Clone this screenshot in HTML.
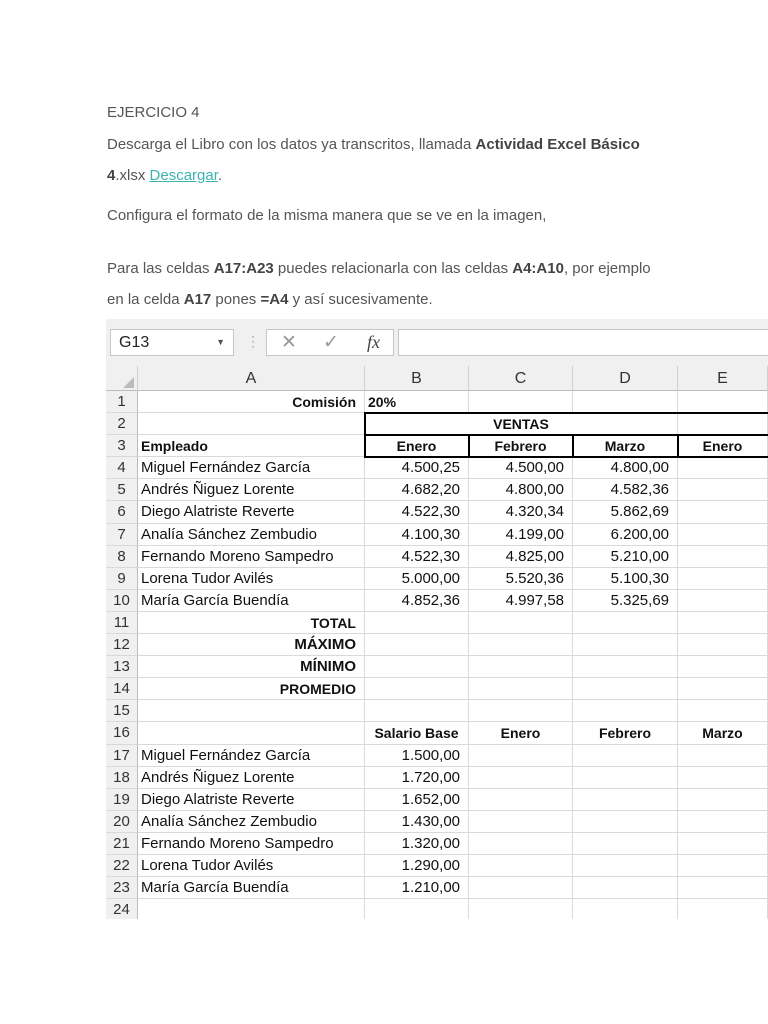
<!DOCTYPE html>
<html><head><meta charset="utf-8"><style>
*{margin:0;padding:0;box-sizing:border-box}
body{width:768px;height:1024px;background:#fff;position:relative;overflow:hidden;font-family:"Liberation Sans",sans-serif}
.t{position:absolute;left:107px;font-size:15px;color:#555;white-space:nowrap}
.t b{color:#444}
.t a{color:#3bb3b0;text-decoration:underline}
#xl{position:absolute;left:106px;top:319px;width:662px;height:600px;background:#fff;overflow:hidden}
#tb{position:absolute;left:0;top:0;width:662px;height:47px;background:#f0f0f0}
.box{position:absolute;background:#fff;border:1px solid #c6c6c6}
#hdr{position:absolute;left:0;top:47px;width:662px;height:25px;background:#f0f0f0;border-bottom:1px solid #bdbdbd;font-size:16px;color:#333}
#hdr div{position:absolute;top:0;height:25px;line-height:25px;text-align:center;border-right:1px solid #d0d0d0}
#g{position:absolute;left:0;top:72px;display:grid;grid-template-columns:32px 227px 104px 104px 105px 90px;grid-auto-rows:22.1px;font-size:15px;color:#111}
#g>div{border-right:1px solid #d9d9d9;border-bottom:1px solid #d9d9d9;white-space:nowrap;overflow:hidden;line-height:22px;padding:0 3px}
#g>div.h{background:#f0f0f0;border-right:1px solid #bdbdbd;text-align:center;padding:0;color:#333;font-size:15px}
.r{text-align:right;padding-right:8px!important}
.c{text-align:center}
.k{font-weight:bold;font-size:14px}
.ln{position:absolute;background:#000}
</style></head><body>
<div class="t" style="top:104px">EJERCICIO 4</div>
<div class="t" style="top:136px">Descarga el Libro con los datos ya transcritos, llamada <b>Actividad Excel Básico</b></div>
<div class="t" style="top:167px"><b>4</b>.xlsx <a>Descargar</a>.</div>
<div class="t" style="top:207px">Configura el formato de la misma manera que se ve en la imagen,</div>
<div class="t" style="top:260px">Para las celdas <b>A17:A23</b> puedes relacionarla con las celdas <b>A4:A10</b>, por ejemplo</div>
<div class="t" style="top:291px">en la celda <b>A17</b> pones <b>=A4</b> y así sucesivamente.</div>

<div id="xl">
<div id="tb">
 <div class="box" style="left:4px;top:10px;width:124px;height:27px;font-size:16px;line-height:25px;padding-left:8px;color:#222">G13<span style="position:absolute;right:8px;font-size:9px;color:#555">▼</span></div>
 <div style="position:absolute;left:140px;top:14px;font-size:14px;color:#aaa">⋮</div>
 <div class="box" style="left:160px;top:10px;width:128px;height:27px;font-size:19px;line-height:25px;color:#999"><span style="position:absolute;left:14px">✕</span><span style="position:absolute;left:56px">✓</span><span style="position:absolute;left:100px;font-family:'Liberation Serif',serif;font-style:italic;font-size:18px;color:#444">fx</span></div>
 <div class="box" style="left:292px;top:10px;width:380px;height:27px"></div>
</div>
<div id="hdr">
 <div style="left:0;width:32px"><span style="position:absolute;right:3px;bottom:3px;width:0;height:0;border-left:11px solid transparent;border-bottom:11px solid #bbb"></span></div>
 <div style="left:32px;width:227px">A</div><div style="left:259px;width:104px">B</div><div style="left:363px;width:104px">C</div><div style="left:467px;width:105px">D</div><div style="left:572px;width:90px">E</div>
</div>
<div id="g">
<div class="h">1</div><div class="r k">Comisión</div><div class="k">20%</div><div></div><div></div><div></div>
<div class="h">2</div><div></div><div style="grid-column:span 3" class="c k">VENTAS</div><div></div>
<div class="h">3</div><div class="k">Empleado</div><div class="c k">Enero</div><div class="c k">Febrero</div><div class="c k">Marzo</div><div class="c k">Enero</div>
<div class="h">4</div><div>Miguel Fernández García</div><div class="r">4.500,25</div><div class="r">4.500,00</div><div class="r">4.800,00</div><div></div>
<div class="h">5</div><div>Andrés Ñiguez Lorente</div><div class="r">4.682,20</div><div class="r">4.800,00</div><div class="r">4.582,36</div><div></div>
<div class="h">6</div><div>Diego Alatriste Reverte</div><div class="r">4.522,30</div><div class="r">4.320,34</div><div class="r">5.862,69</div><div></div>
<div class="h">7</div><div>Analía Sánchez Zembudio</div><div class="r">4.100,30</div><div class="r">4.199,00</div><div class="r">6.200,00</div><div></div>
<div class="h">8</div><div>Fernando Moreno Sampedro</div><div class="r">4.522,30</div><div class="r">4.825,00</div><div class="r">5.210,00</div><div></div>
<div class="h">9</div><div>Lorena Tudor Avilés</div><div class="r">5.000,00</div><div class="r">5.520,36</div><div class="r">5.100,30</div><div></div>
<div class="h">10</div><div>María García Buendía</div><div class="r">4.852,36</div><div class="r">4.997,58</div><div class="r">5.325,69</div><div></div>
<div class="h">11</div><div class="r k">TOTAL</div><div></div><div></div><div></div><div></div>
<div class="h">12</div><div class="r k" style="font-size:15px">MÁXIMO</div><div></div><div></div><div></div><div></div>
<div class="h">13</div><div class="r k" style="font-size:15px">MÍNIMO</div><div></div><div></div><div></div><div></div>
<div class="h">14</div><div class="r k">PROMEDIO</div><div></div><div></div><div></div><div></div>
<div class="h">15</div><div></div><div></div><div></div><div></div><div></div>
<div class="h">16</div><div></div><div class="c k">Salario Base</div><div class="c k">Enero</div><div class="c k">Febrero</div><div class="c k">Marzo</div>
<div class="h">17</div><div>Miguel Fernández García</div><div class="r">1.500,00</div><div></div><div></div><div></div>
<div class="h">18</div><div>Andrés Ñiguez Lorente</div><div class="r">1.720,00</div><div></div><div></div><div></div>
<div class="h">19</div><div>Diego Alatriste Reverte</div><div class="r">1.652,00</div><div></div><div></div><div></div>
<div class="h">20</div><div>Analía Sánchez Zembudio</div><div class="r">1.430,00</div><div></div><div></div><div></div>
<div class="h">21</div><div>Fernando Moreno Sampedro</div><div class="r">1.320,00</div><div></div><div></div><div></div>
<div class="h">22</div><div>Lorena Tudor Avilés</div><div class="r">1.290,00</div><div></div><div></div><div></div>
<div class="h">23</div><div>María García Buendía</div><div class="r">1.210,00</div><div></div><div></div><div></div>
<div class="h">24</div><div></div><div></div><div></div><div></div><div></div>
</div>
<div class="ln" style="left:258px;top:93px;width:404px;height:2px"></div>
<div class="ln" style="left:258px;top:115px;width:404px;height:2px"></div>
<div class="ln" style="left:258px;top:137px;width:404px;height:2px"></div>
<div class="ln" style="left:258px;top:93px;width:2px;height:46px"></div>
<div class="ln" style="left:362px;top:115px;width:2px;height:24px"></div>
<div class="ln" style="left:466px;top:115px;width:2px;height:24px"></div>
<div class="ln" style="left:571px;top:115px;width:2px;height:24px"></div>
</div>
</body></html>
